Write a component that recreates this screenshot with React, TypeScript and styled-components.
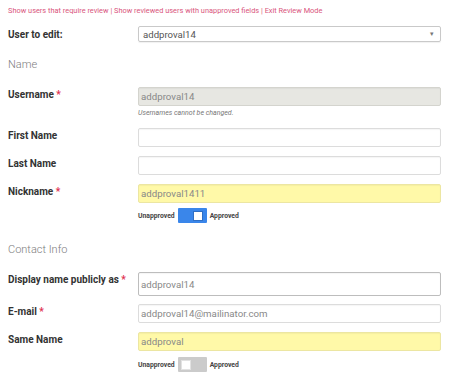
import styled, { createGlobalStyle } from 'styled-components';

const GlobalStyle = createGlobalStyle`
	html, body {
		margin: 0;
		padding: 0;
		background: #fff;
	}
	body {
		font-family: Roboto, 'Liberation Sans', sans-serif;
	}
`;

type Tone = 'plain' | 'locked' | 'pending' | 'strong';

const fieldColors: Record<Tone, { bg: string; border: string }> = {
	plain: { bg: '#fff', border: '#dcdcdc' },
	locked: { bg: '#e7e7e2', border: '#d4d4ce' },
	pending: { bg: '#fff9a8', border: '#ece6a2' },
	strong: { bg: '#fff', border: '#bdbdbd' },
};

export default function App() {
	return (
		<>
			<GlobalStyle />
			<Page>
				<ReviewLinks>
					<a>Show users that require review</a> | <a>Show reviewed users with unapproved fields</a> | <a>Exit Review Mode</a>
				</ReviewLinks>

				<Row $gap={10} $center>
					<Label>User to edit:</Label>
					<Select>
						<span>addproval14</span>
						<Caret>▾</Caret>
					</Select>
				</Row>

				<Section $top={16}>Name</Section>

				<Row $gap={15}>
					<Label>
						Username <Req>*</Req>
					</Label>
					<div>
						<Field $tone='locked'>addproval14</Field>
						<Hint>Usernames cannot be changed.</Hint>
					</div>
				</Row>

				<Row $gap={10}>
					<Label>First Name</Label>
					<Field $tone='plain' />
				</Row>

				<Row $gap={9}>
					<Label>Last Name</Label>
					<Field $tone='plain' />
				</Row>

				<Row $gap={9}>
					<Label>
						Nickname <Req>*</Req>
					</Label>
					<div>
						<Field $tone='pending'>addproval1411</Field>
						<Approval $gap={5} $on />
					</div>
				</Row>

				<Section $top={20}>Contact Info</Section>

				<Row $gap={15}>
					<Label>
						Display name publicly as <Req>*</Req>
					</Label>
					<Field $tone='strong' $tall>
						addproval14
					</Field>
				</Row>

				<Row $gap={8}>
					<Label>
						E-mail <Req>*</Req>
					</Label>
					<Field $tone='plain'>addproval14@mailinator.com</Field>
				</Row>

				<Row $gap={9}>
					<Label>Same Name</Label>
					<div>
						<Field $tone='pending'>addproval</Field>
						<Approval $gap={6} $on={false} />
					</div>
				</Row>
			</Page>
		</>
	);
}

function Approval({ $gap, $on }: { $gap: number; $on: boolean }) {
	return (
		<ToggleRow $gap={$gap}>
			<ToggleText>Unapproved</ToggleText>
			<Switch $on={$on}>
				<Knob $on={$on} />
			</Switch>
			<ToggleText>Approved</ToggleText>
		</ToggleRow>
	);
}

const Page = styled.div`
	width: 441px;
	padding: 6px 0 0 8px;
`;

const ReviewLinks = styled.div`
	font-size: 7.4px;
	line-height: 10px;
	color: #d9557d;
	white-space: nowrap;

	& a {
		color: inherit;
		cursor: pointer;
	}
`;

const Row = styled.div<{ $gap: number; $center?: boolean }>`
	display: grid;
	grid-template-columns: 130px 303px;
	align-items: ${(p) => (p.$center ? 'center' : 'start')};
	margin-top: ${(p) => p.$gap}px;
`;

const Label = styled.div`
	font-size: 10px;
	font-weight: 700;
	line-height: 14px;
	padding-top: 1px;
	color: #333;
	white-space: nowrap;
`;

const Req = styled.span`
	color: #e0314f;
`;

const Section = styled.div<{ $top: number }>`
	margin-top: ${(p) => p.$top}px;
	font-size: 11px;
	font-weight: 300;
	line-height: 14px;
	color: #7d7d7d;
`;

const Select = styled.div`
	height: 16px;
	box-sizing: border-box;
	border: 1px solid #c9c9c9;
	border-radius: 2px;
	display: flex;
	align-items: center;
	justify-content: space-between;
	padding: 0 6px 0 4px;
	font-size: 9.6px;
	color: #555;
	box-shadow: 0 1px 1px rgba(0, 0, 0, 0.06);
`;

const Caret = styled.span`
	font-size: 7px;
	color: #777;
`;

const Field = styled.div<{ $tone: Tone; $tall?: boolean }>`
	height: ${(p) => (p.$tall ? 24 : 19)}px;
	box-sizing: border-box;
	background: ${(p) => fieldColors[p.$tone].bg};
	border: 1px solid ${(p) => fieldColors[p.$tone].border};
	border-radius: 2px;
	display: flex;
	align-items: center;
	padding: 0 2px;
	font-size: 9.7px;
	color: #888;
	box-shadow: inset 0 1px 1px rgba(0, 0, 0, 0.04);
`;

const Hint = styled.div`
	margin-top: 2px;
	font-size: 7px;
	line-height: 10px;
	font-style: italic;
	color: #777;
`;

const ToggleRow = styled.div<{ $gap: number }>`
	display: flex;
	align-items: center;
	gap: 3px;
	margin-top: ${(p) => p.$gap}px;
`;

const ToggleText = styled.span`
	font-size: 6.8px;
	font-weight: 700;
	color: #444;
`;

const Switch = styled.div<{ $on: boolean }>`
	position: relative;
	width: 29px;
	height: 15px;
	box-sizing: border-box;
	background: ${(p) => (p.$on ? '#3a86ea' : '#cbcbcb')};
	border-radius: 1px;
`;

const Knob = styled.div<{ $on: boolean }>`
	position: absolute;
	top: 3px;
	${(p) => (p.$on ? 'right: 4px;' : 'left: 3px;')}
	width: 10px;
	height: 10px;
	box-sizing: border-box;
	background: #fff;
	border: 1px solid ${(p) => (p.$on ? '#2f6fc5' : '#e2e2e2')};
`;
